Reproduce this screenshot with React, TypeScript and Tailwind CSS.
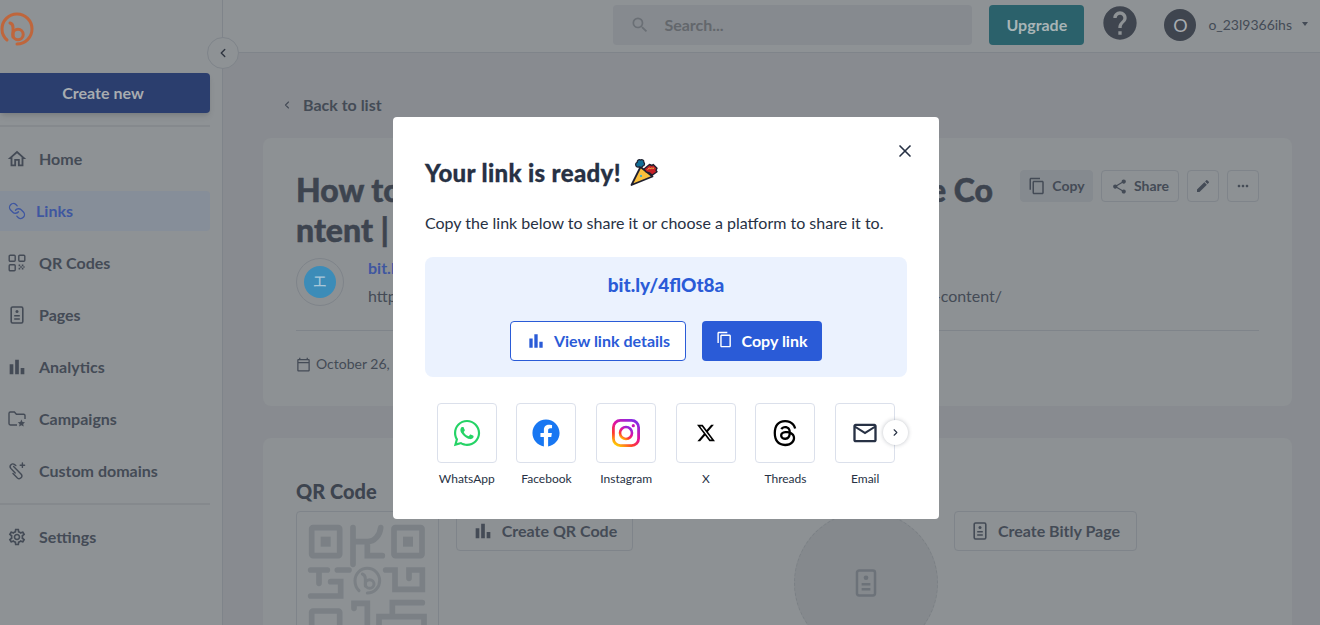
import React from 'react'
import { ChevronLeft, ChevronRight, Link as LinkIcon, X as XIcon } from 'lucide-react'
import { FaFacebook, FaWhatsapp } from 'react-icons/fa'
import { FaThreads } from 'react-icons/fa6'
import { SiX } from 'react-icons/si'
import {
  MdBarChart,
  MdContentCopy,
  MdEdit,
  MdHelp,
  MdMailOutline,
  MdMoreHoriz,
  MdOutlineCalendarToday,
  MdOutlineHome,
  MdOutlineSettings,
  MdSearch,
  MdShare,
} from 'react-icons/md'

const BitlyLogo = () => (
  <svg width="34" height="34" viewBox="0 0 34 34" fill="none" stroke="#bf663c" strokeWidth="3" strokeLinecap="round">
    <path d="M7 28C3.500 25 2 21 2 17 2 8.700 8.700 2 17 2s15 6.700 15 15-6.700 15-15 15" />
    <path d="M10 11c2 .6 3 2 3 4.500V25" />
    <circle cx="18" cy="22.500" r="5.200" />
  </svg>
)

const QrIcon = () => (
  <svg width="18" height="18" viewBox="0 0 18 18" fill="none" stroke="currentColor" strokeWidth="1.400">
    <rect x="1.200" y="1.200" width="6" height="6" rx="1" />
    <rect x="10.800" y="1.200" width="6" height="6" rx="1" />
    <rect x="1.200" y="10.800" width="6" height="6" rx="1" />
    <path d="M10.600 10.600h1.600v1.600h-1.600zM13.800 10.600h1.600v1.600h-1.600zM12.200 12.200h1.600v1.600h-1.600zM15.400 12.200h1.200v1.600h-1.200zM10.600 13.800h1.600v1.600h-1.600zM13.800 13.800h1.600v1.600h-1.600z" fill="currentColor" stroke="none" />
  </svg>
)

const PageIcon = ({ size = 18 }: { size?: number }) => (
  <svg width={size} height={size} viewBox="0 0 18 18" fill="none" stroke="currentColor" strokeWidth="1.600">
    <rect x="3.200" y="1" width="11.600" height="16" rx="1.400" />
    <circle cx="9" cy="5.600" r="1.500" fill="currentColor" stroke="none" />
    <path d="M6.200 9.800h5.600M6.200 13h5.600" />
  </svg>
)

const CampaignIcon = () => (
  <svg width="18" height="18" viewBox="0 0 18 18" fill="none" stroke="currentColor" strokeWidth="1.400">
    <path d="M9 15H2.400A1.400 1.400 0 0 1 1 13.600V3.400A1.400 1.400 0 0 1 2.400 2h4l2 2.200h7.200A1.400 1.400 0 0 1 17 5.600V9" />
    <path d="M13.400 9.600l1.100 2.300 2.500.3-1.800 1.700.5 2.500-2.300-1.200-2.300 1.200.5-2.500-1.800-1.700 2.500-.3z" fill="currentColor" stroke="none" />
  </svg>
)

const DomainIcon = () => (
  <svg width="18" height="18" viewBox="0 0 18 18" fill="none" stroke="currentColor" strokeWidth="1.400" strokeLinecap="round">
    <path d="M7.800 3.500L6.600 2.600a2.700 2.700 0 0 0-3.800 3.800l4.400 4.600" />
    <path d="M5.600 4.600l7.600 7.600a2.700 2.700 0 0 1-3.800 3.800L5 11.400" />
    <path d="M14.400 1v4.400M12.200 3.200h4.400" />
  </svg>
)

const InstagramIcon = () => (
  <svg width="28" height="28" viewBox="0 0 28 28" fill="none">
    <defs>
      <linearGradient id="ig" x1="0.1" y1="1" x2="0.75" y2="0">
        <stop offset="0" stopColor="#ffd600" />
        <stop offset="0.3" stopColor="#ff3d2e" />
        <stop offset="0.6" stopColor="#e3109f" />
        <stop offset="1" stopColor="#8a2be2" />
      </linearGradient>
    </defs>
    <rect x="1.400" y="1.400" width="25.200" height="25.200" rx="7" stroke="url(#ig)" strokeWidth="2.800" />
    <circle cx="14" cy="14" r="6" stroke="url(#ig)" strokeWidth="2.600" />
    <circle cx="21.300" cy="6.700" r="1.600" fill="#c913b9" />
  </svg>
)

const PartyIcon = () => (
  <svg width="30" height="30" viewBox="0 0 30 30">
    <path d="M2.500 27L11.500 9l12 9.500-21 8.500z" fill="#fbbf3c" stroke="#1f1f2e" strokeWidth="1.800" strokeLinejoin="round" />
    <circle cx="12" cy="18" r="1.100" fill="#2aa9d8" />
    <path d="M7 8c-1-2 .2-3.500 1.200-3.500C8 2.500 10 .8 11.500 2c1.600-1 3.800.4 3.300 2.200 1.400 1 .8 3.600-.8 3.800-.6 1.400-2.400 1.800-3.600.8C8.800 9.200 7.400 9 7 8z" fill="#126e96" stroke="#1f1f2e" strokeWidth="1.200" />
    <path d="M15 11l5.500-4.500 2.500 1 1.200-1 3.800 3.800-1 2 1 1.400-4.800 3.600-2.800-2.400-3.200-1z" fill="#c62026" stroke="#1f1f2e" strokeWidth="1.400" strokeLinejoin="round" />
    <path d="M18.500 11.500l2-1.600 1 1.200 1.400-1.400 1 1 1.200-1" fill="none" stroke="#f6d24a" strokeWidth="0.900" />
  </svg>
)

const QrPicture = () => (
  <svg width="141" height="141" viewBox="54 126 423 423" fill="none" stroke="#7b8085" strokeWidth="17" strokeLinecap="round">
    <g strokeLinejoin="round">
      <rect x="98" y="173" width="84" height="84" rx="4" />
      <rect x="345" y="173" width="84" height="84" rx="4" />
      <rect x="98" y="423" width="84" height="84" rx="4" />
    </g>
    <g fill="#7b8085" stroke="none">
      <rect x="125" y="200" width="30" height="30" />
      <rect x="372" y="200" width="30" height="30" />
    </g>
    <path d="M222 173v110M232 215h33c22 0 38-20 40-42M265 215v42h45" />
    <path d="M95 300h50M120 300v40M175 300h35M155 335h30v43H95" />
    <path d="M320 300h28v58h82v-58h-40v25" />
    <path d="M225 415v-15h40v65M300 465v-25h135v25M340 440v-42h90" />
    <g strokeWidth="9">
      <path d="M240 362c-8-8-12-18-12-30 0-20 16-37 37-37s37 17 37 37-16 37-37 37" />
      <path d="M250 312c6 2 9 6 9 14v22" />
      <circle cx="272" cy="342" r="13" />
    </g>
  </svg>
)

const navTop = [
  { label: 'Home', icon: <MdOutlineHome size={22} /> },
  { label: 'Links', icon: <LinkIcon size={18} strokeWidth={1.800} className="-scale-x-100" />, active: true },
  { label: 'QR Codes', icon: <QrIcon /> },
  { label: 'Pages', icon: <PageIcon /> },
  { label: 'Analytics', icon: <MdBarChart size={22} /> },
  { label: 'Campaigns', icon: <CampaignIcon /> },
  { label: 'Custom domains', icon: <DomainIcon /> },
]

const platforms = [
  { label: 'WhatsApp', icon: <FaWhatsapp size={30} className="text-[#25d366]" /> },
  { label: 'Facebook', icon: <FaFacebook size={28} className="text-[#1877f2]" /> },
  { label: 'Instagram', icon: <InstagramIcon /> },
  { label: 'X', icon: <SiX size={18} className="text-black" /> },
  { label: 'Threads', icon: <FaThreads size={28} className="text-black" /> },
  { label: 'Email', icon: <MdMailOutline size={28} className="text-[#273144]" /> },
]

const Sidebar = () => (
  <aside className="w-[223px] shrink-0 h-full border-r border-[#7f848a] bg-[#8e9295] pr-3">
    <div className="h-[73px] pt-3">
      <BitlyLogo />
    </div>
    <button className="flex h-10 w-full items-center justify-center rounded-r bg-[#2b3e6e] pr-[4px] font-bold text-[#a8acb0] shadow-md">
      Create new
    </button>
    <div className="mt-[12px] border-t-2 border-[#85898d]" />
    <nav className="mt-3 flex flex-col gap-3">
      {navTop.map((item) => (
        <a
          key={item.label}
          className={`flex h-10 items-center rounded-r font-bold ${item.active ? 'bg-[#868e99] text-[#3f57a0]' : 'text-[#444b56]'}`}
        >
          <span className={`flex w-[34px] shrink-0 justify-center ${item.active ? '' : 'mr-[5px]'}`}>{item.icon}</span>
          <span className={item.active ? 'ml-[2px]' : ''}>{item.label}</span>
        </a>
      ))}
    </nav>
    <div className="mt-[12px] border-t-2 border-[#85898d]" />
    <a className="mt-3 flex h-10 items-center font-bold text-[#444b56]">
      <span className="mr-[5px] flex w-[34px] justify-center">
        <MdOutlineSettings size={20} />
      </span>
      Settings
    </a>
  </aside>
)

const Header = () => (
  <header className="flex h-[53px] shrink-0 items-start justify-end border-b border-[#7f848a] bg-[#8e9295] pt-[5px] pr-[12px]">
    <div className="flex h-10 w-[359px] items-center rounded bg-[#868a8f] pl-[17px] font-bold text-[#63676c]">
      <MdSearch size={20} className="mr-[14px] text-[#6a6f75]" />
      Search...
    </div>
    <button className="ml-[17px] flex h-10 w-[95px] items-center justify-center rounded bg-[#2b616b] font-bold text-[#a8b4b6]">
      Upgrade
    </button>
    <span className="ml-[16px] mt-[-2px] text-[#3f454f]">
      <MdHelp size={40} />
    </span>
    <span className="ml-[24px] mt-[4px] flex h-8 w-8 items-center justify-center rounded-full bg-[#3f454f] text-lg text-[#a8acb0]">
      O
    </span>
    <span className="ml-3 mt-[10px] text-sm text-[#444b56]">o_23l9366ihs</span>
    <span className="ml-[10px] mt-[17px] h-0 w-0 border-x-[3px] border-t-[4px] border-x-transparent border-t-[#444b56]" />
  </header>
)

const ActionButton = ({ icon, label, filled, width }: { icon: React.ReactNode; label?: string; filled?: boolean; width: string }) => (
  <button
    className={`flex h-8 items-center justify-center gap-[6px] rounded border text-sm font-bold text-[#444b56] ${filled ? 'border-[#858a8f] bg-[#858a8f]' : 'border-[#7f848a]'} ${width}`}
  >
    {icon}
    {label}
  </button>
)

const LinkCard = () => (
  <section className="h-[268px] rounded-lg bg-[#8d9194] px-[33px] pt-[32px] text-[#444b56]">
    <div className="flex justify-between">
      <h1 className="w-[697px] text-[32px] font-black leading-10 text-[#3d444f] [-webkit-text-stroke:0.5px]">
        <span className="flex justify-between">
          <span>How to</span>
          <span>Website Co</span>
        </span>
        <span className="block">ntent |</span>
      </h1>
      <div className="flex gap-2">
        <ActionButton filled width="w-[73px]" icon={<MdContentCopy size={18} />} label="Copy" />
        <ActionButton width="w-[78px]" icon={<MdShare size={17} />} label="Share" />
        <ActionButton width="w-8" icon={<MdEdit size={16} />} />
        <ActionButton width="w-8" icon={<MdMoreHoriz size={16} />} />
      </div>
    </div>
    <div className="mt-2 flex items-start">
      <span className="flex h-12 w-12 items-center justify-center rounded-full border border-[#7f848a]">
        <span className="flex h-8 w-8 items-center justify-center rounded-full bg-[#3c8cb8] text-xs font-bold text-[#a9c7d8]">
          工
        </span>
      </span>
      <div className="ml-6 -mt-[2px]">
        <div className="font-bold leading-6 text-[#3f57a0]">bit.ly/4flOt8a</div>
        <div className="mt-1 w-[634px] truncate text-right leading-6">
          <span className="float-left">https://</span>-content/
        </div>
      </div>
    </div>
    <div className="mt-[22px] border-t border-[#7f848a]" />
    <div className="mt-[23px] flex items-center gap-[5px] text-sm">
      <MdOutlineCalendarToday size={15} />
      October 26, 2024
    </div>
  </section>
)

const AddonCard = () => (
  <section className="mt-8 flex h-[300px] rounded-lg bg-[#8d9194] pl-[33px] pt-[41px] text-[#444b56]">
    <div className="w-[498px]">
      <h2 className="text-xl font-black leading-6 text-[#3d444f]">QR Code</h2>
      <div className="mt-2 flex items-start gap-[17px]">
        <div className="h-[143px] w-[143px] rounded border border-[#7f848a]">
          <QrPicture />
        </div>
        <button className="flex h-10 w-[177px] items-center justify-center gap-2 rounded border border-[#7f848a] font-bold">
          <MdBarChart size={22} />
          Create QR Code
        </button>
      </div>
    </div>
    <div className="pt-8">
      <div className="flex items-start gap-4">
        <div className="flex h-[144px] w-[144px] items-center justify-center rounded-full border border-dashed border-[#7b8085] bg-[#85898d] text-[#6c7279]">
          <PageIcon size={28} />
        </div>
        <button className="flex h-10 w-[183px] items-center justify-center gap-[9px] rounded border border-[#7f848a] font-bold">
          <PageIcon />
          Create Bitly Page
        </button>
      </div>
    </div>
  </section>
)

const ShareModal = () => (
  <div className="absolute inset-0 flex items-center justify-center pl-3 pt-[11px]">
    <div className="relative h-[402px] w-[546px] rounded bg-white px-8 pt-[36px] text-[#273144]">
      <button className="absolute right-[24px] top-[24px] text-[#273144]">
        <XIcon size={20} strokeWidth={2} />
      </button>
      <h2 className="flex h-10 items-center text-2xl font-black tracking-[0.35px] [-webkit-text-stroke:0.3px]">
        Your link is ready!
        <span className="ml-2">
          <PartyIcon />
        </span>
      </h2>
      <p className="mt-[18px] leading-6">Copy the link below to share it or choose a platform to share it to.</p>
      <div className="mt-[22px] flex h-[120px] flex-col items-center rounded-lg bg-[#ebf2fe] pt-[14px]">
        <a className="text-[19px] font-black leading-7 text-[#2a5bd7]">bit.ly/4flOt8a</a>
        <div className="mt-[22px] flex gap-4">
          <button className="flex h-10 w-[176px] items-center justify-center gap-2 rounded border border-[#2a5bd7] bg-white font-bold text-[#2a5bd7]">
            <MdBarChart size={20} />
            View link details
          </button>
          <button className="flex h-10 w-[120px] items-center justify-center gap-2 rounded bg-[#2a5bd7] font-bold text-white">
            <MdContentCopy size={17} className="-mt-1" />
            Copy link
          </button>
        </div>
      </div>
      <div className="relative mt-[26px] ml-[2px] grid w-[478px] grid-cols-6">
        {platforms.map((p) => (
          <div key={p.label} className="flex flex-col items-center">
            <span className="flex h-[60px] w-[60px] items-center justify-center rounded border border-[#dbe0eb]">
              {p.icon}
            </span>
            <span className="mt-2 text-xs leading-4">{p.label}</span>
          </div>
        ))}
        <button className="absolute right-[-3px] top-[17px] flex h-[25px] w-[25px] items-center justify-center rounded-full bg-white shadow-[0_0_4px_rgba(39,49,68,0.3)]">
          <ChevronRight size={11} strokeWidth={2.400} />
        </button>
      </div>
    </div>
  </div>
)

export default function App() {
  return (
    <div className="relative flex h-[625px] w-[1320px] overflow-hidden bg-[#888b90] font-['Lato',sans-serif] text-[#444b56]">
      <Sidebar />
      <button className="absolute left-[207px] top-[37px] z-10 flex h-[32px] w-[32px] items-center justify-center rounded-full border border-[#7f848a] bg-[#8e9295] text-[#2f3540]">
        <ChevronLeft size={14} strokeWidth={2.400} />
      </button>
      <div className="flex min-w-0 flex-1 flex-col">
        <Header />
        <main className="pl-[40px] pr-[28px] pt-[40px]">
          <a className="flex h-6 items-center font-bold text-[#444b56]">
            <ChevronLeft size={12} strokeWidth={2.200} className="ml-[18px] mr-[10px]" />
            Back to list
          </a>
          <div className="mt-[21px]">
            <LinkCard />
            <AddonCard />
          </div>
        </main>
      </div>
      <ShareModal />
    </div>
  )
}
